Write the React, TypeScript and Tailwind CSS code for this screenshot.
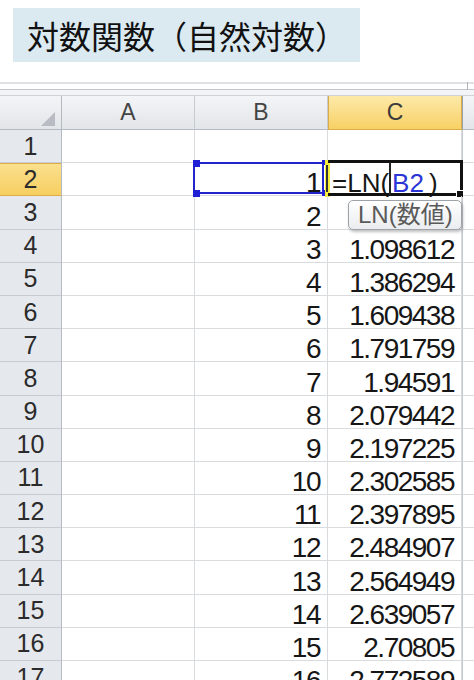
import React from "react";

const data: [string, string][] = [
  ["", ""],
  ["1", "__f"],
  ["2", ""],
  ["3", "1.098612"],
  ["4", "1.386294"],
  ["5", "1.609438"],
  ["6", "1.791759"],
  ["7", "1.94591"],
  ["8", "2.079442"],
  ["9", "2.197225"],
  ["10", "2.302585"],
  ["11", "2.397895"],
  ["12", "2.484907"],
  ["13", "2.564949"],
  ["14", "2.639057"],
  ["15", "2.70805"],
  ["16", "2.772589"],
];

const cols = "grid grid-cols-[62px_133px_133px_134px_12px]";

function NumCell({ v, children }: { v: string; children?: React.ReactNode }) {
  return (
    <div className="relative flex items-end justify-end border-r border-b border-[#d9dcdf] pr-[7px]">
      <span className="text-[28px] leading-[24px] tracking-[-1.5px] text-[#161616]">{v}</span>
      {children}
    </div>
  );
}

export default function App() {
  return (
    <div className="relative h-[680px] w-[474px] overflow-hidden bg-white font-['Liberation_Sans','Noto_Sans_CJK_JP',sans-serif]">
      {/* title */}
      <div className="pl-[13px] pt-[8px]">
        <div className="flex h-[54px] w-[347px] items-center bg-[#dbe9f0] pl-[14px] font-['Noto_Sans_CJK_JP',sans-serif] text-[32px] leading-none text-[#111]">
          対数関数（自然対数）
        </div>
      </div>

      {/* top strip */}
      <div className="relative mt-[20px] h-[14px] border-t-2 border-[#dfe2e5]">
        <div className="mt-[5px] h-[1px] bg-[#c3c7cc]" />
        <div className="h-[5px] bg-[#f3f4f6]" />
        <div className="h-[1px] bg-[#cfd3d8]" />
        <div className="absolute right-[6px] top-[-2px] h-[8px] w-[1px] bg-[#aeb3b9]" />
      </div>

      {/* column header */}
      <div className={`${cols} h-[34px]`}>
        <div className="relative border-r border-b border-[#b4bac2] bg-linear-to-b from-[#f4f5f7] to-[#e2e5e9]">
          <svg className="absolute left-[40px] top-[15px]" width="16" height="16" viewBox="0 0 16 16">
            <polygon points="15,1 15,15 1,15" fill="#b9bdc3" />
          </svg>
        </div>
        {["A", "B"].map((c) => (
          <div
            key={c}
            className="flex items-center justify-center border-r border-b border-r-[#c6cbd1] border-b-[#b4bac2] bg-linear-to-b from-[#f4f5f7] to-[#e2e5e9] text-[23px] leading-none text-[#444]"
          >
            {c}
          </div>
        ))}
        <div className="flex items-center justify-center border-r border-b border-l border-[#d9ac48] bg-linear-to-b from-[#fde9a8] to-[#f8d163] text-[23px] leading-none text-[#3a3a3a]">
          C
        </div>
        <div className="border-l border-b border-l-[#9aa1aa] border-b-[#b4bac2] bg-linear-to-b from-[#f4f5f7] to-[#e2e5e9]" />
      </div>

      {/* rows */}
      {data.map(([b, c], i) => {
        const n = i + 1;
        const sel = n === 2;
        return (
          <div key={n} className={`${cols} h-[33.2px]`}>
            <div
              className={
                sel
                  ? "flex items-center justify-center border-r border-b border-r-[#b4bac2] border-b-[#dcae4a] bg-linear-to-b from-[#fbe08e] to-[#f7cf60] shadow-[inset_0_1px_0_#dcae4a] text-[25px] leading-none text-[#2b2b2b]"
                  : "flex items-center justify-center border-r border-b border-r-[#b4bac2] border-b-[#c8ccd2] bg-[#e5e8ec] text-[25px] leading-none text-[#2b2b2b]"
              }
            >
              {n}
            </div>
            <div className="border-r border-b border-[#d9dcdf]" />
            <NumCell v={b}>
              {sel && (
                <>
                  <div className="absolute left-[-2px] top-[-1px] h-[32px] w-[131px] border-2 border-[#2424cc]" />
                  <div className="absolute left-[-2px] top-[-3px] h-[7px] w-[7px] bg-[#1f1fd6]" />
                  <div className="absolute left-[-2px] top-[27px] h-[7px] w-[7px] bg-[#1f1fd6]" />
                  <div className="absolute left-[127px] top-[-3px] h-[5px] w-[3px] bg-[#1f1fd6]" />
                  <div className="absolute left-[127px] top-[27px] h-[6px] w-[3px] bg-[#1f1fd6]" />
                  <div className="absolute left-[130px] top-[-3px] h-[37px] w-[5px] bg-[#f6f03a]" />
                  <div className="absolute left-[131px] top-[2px] h-[27px] w-[2px] bg-[#333]" />
                </>
              )}
            </NumCell>
            {c === "__f" ? (
              <div className="relative flex items-end border-r border-b border-[#d9dcdf] pl-[4px]">
                <span className="text-[26px] leading-[24px] text-[#161616]">
                  =LN(
                  <span className="ml-[3px] text-[#2b35d6]">B2</span>
                  <span className="ml-[5px]">)</span>
                </span>
                <div className="absolute left-0 top-[-3px] h-[36px] w-[135px] border-y-[3px] border-r-[3px] border-[#111]" />
                <div className="absolute left-[61px] top-[-1px] h-[33px] w-[1.5px] bg-[#222]" />
                <div className="absolute left-[128px] top-[27px] h-[7px] w-[7px] border-l border-t border-white bg-[#111]" />
              </div>
            ) : n === 3 ? (
              <div className="relative border-r border-b border-[#d9dcdf]">
                <div className="absolute left-[20px] top-[4px] z-10 flex h-[30px] w-[114px] items-center rounded-[5px] border border-[#9ea3a9] bg-linear-to-b from-white to-[#eaecef] pl-[9px] shadow-[1px_2px_3px_rgba(0,0,0,0.25)]">
                  <span className="text-[24px] leading-none text-[#5a5a5a]">LN(数値)</span>
                </div>
              </div>
            ) : (
              <NumCell v={c} />
            )}
            <div className="border-l border-b border-l-[#c4c8cd] border-b-[#d9dcdf]" />
          </div>
        );
      })}
    </div>
  );
}
